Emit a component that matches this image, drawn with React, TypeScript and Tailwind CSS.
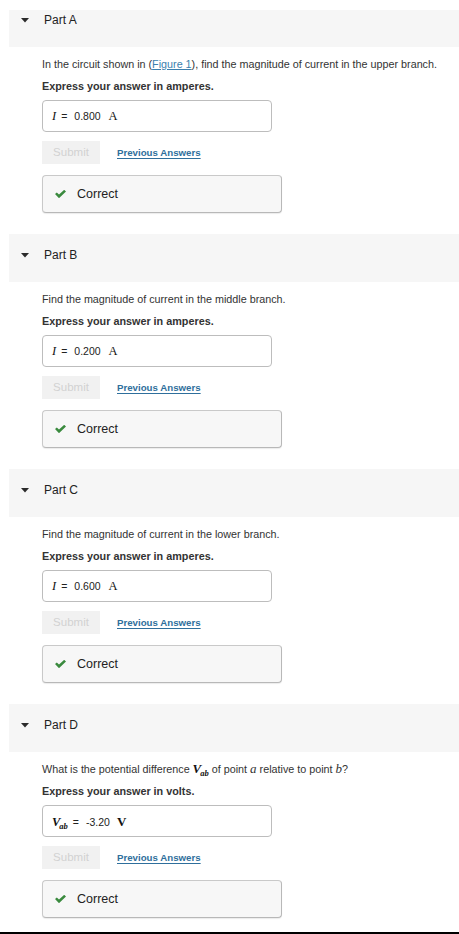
import React from "react"

const serif = "font-['Liberation_Serif','Times_New_Roman',serif]"

function Caret() {
  return (
    <svg width="8" height="5" viewBox="0 0 8 5" className="block">
      <polygon points="0,0 8,0 4,4.6" fill="#2b2b2b" />
    </svg>
  )
}

function Check() {
  return (
    <svg width="11" height="8" viewBox="0 0 11 8" className="block">
      <polygon points="0,4.1 1.8,2.4 4,4.6 9.2,-0.2 11,1.6 4,8.2" fill="#3a8a3e" />
    </svg>
  )
}

function Header({ label, first }: { label: string; first?: boolean }) {
  return (
    <div
      className={`ml-[9px] bg-[#f6f6f6] flex items-start ${
        first ? "h-[37px] pt-[2px]" : "h-[48px] pt-[13px]"
      }`}
    >
      <div className="w-[35px] h-[16px] pl-[12px] flex items-center">
        <Caret />
      </div>
      <span className="text-[12px] leading-[16px] text-[#222]">{label}</span>
    </div>
  )
}

function Answer({ children }: { children: React.ReactNode }) {
  return (
    <div className="mt-[7px] w-[230px] h-[32px] border border-[#bdbdbd] rounded-[4px] bg-white pl-[9px] flex items-center pt-[1px]">
      {children}
    </div>
  )
}

function Controls() {
  return (
    <>
      <div className="mt-[9px] flex items-center h-[23px]">
        <div className="w-[58px] h-[23px] bg-[#f1f1f1] flex items-center justify-center text-[11.5px] text-[#d2d2d2]">
          Submit
        </div>
        <a className="ml-[17px] mt-[1px] text-[9.7px] font-bold text-[#2f6f9c] underline underline-offset-[2px] decoration-[#2f6f9c]">
          Previous Answers
        </a>
      </div>
      <div className="mt-[11px] w-[240px] h-[38px] bg-[#f7f7f7] border border-[#c9c9c9] border-b-[#b8b8b8] border-r-[#b8b8b8] rounded-[4px] shadow-[0_1px_1px_rgba(0,0,0,0.08)] flex items-center pl-[12px]">
        <Check />
        <span className="ml-[11px] text-[12.5px] text-[#222]">Correct</span>
      </div>
    </>
  )
}

function Part({
  label,
  first,
  question,
  unit,
  answer,
  last,
}: {
  label: string
  first?: boolean
  question: React.ReactNode
  unit: string
  answer: React.ReactNode
  last?: boolean
}) {
  return (
    <section className={last ? "" : "mb-[21px]"}>
      <Header label={label} first={first} />
      <div className="pl-[42px]">
        <p className="mt-[10px] text-[10.77px] leading-[14px] text-[#333]">{question}</p>
        <p className="mt-[8px] text-[10.8px] leading-[14px] font-bold text-[#333]">
          Express your answer in {unit}.
        </p>
        <Answer>{answer}</Answer>
        <Controls />
      </div>
    </section>
  )
}

function Vab({ size }: { size: string }) {
  return (
    <span className={`${serif} italic font-semibold text-[#111] ${size}`}>
      V
      <span className="inline-block text-[8.5px] leading-[8px] relative top-[3px] -ml-[1px]">ab</span>
    </span>
  )
}

function CurrentAnswer({ value }: { value: string }) {
  return (
    <div className="flex items-baseline text-[#222]">
      <span className={`${serif} italic text-[12.5px] text-[#111]`}>I</span>
      <span className="ml-[5px] text-[10.5px]">=</span>
      <span className="ml-[7px] text-[10.5px]">{value}</span>
      <span className={`${serif} ml-[8px] text-[12.5px] text-[#111]`}>A</span>
    </div>
  )
}

export default function App() {
  return (
    <div className="w-[459px] h-[934px] overflow-hidden bg-white pt-[10px] font-['Liberation_Sans',Arial,sans-serif] flex flex-col">
      <Part
        label="Part A"
        first
        unit="amperes"
        question={
          <>
            In the circuit shown in (
            <a className="text-[#3b7fae] underline">Figure 1</a>), find the magnitude of current in the
            upper branch.
          </>
        }
        answer={<CurrentAnswer value="0.800" />}
      />
      <Part
        label="Part B"
        unit="amperes"
        question="Find the magnitude of current in the middle branch."
        answer={<CurrentAnswer value="0.200" />}
      />
      <Part
        label="Part C"
        unit="amperes"
        question="Find the magnitude of current in the lower branch."
        answer={<CurrentAnswer value="0.600" />}
      />
      <Part
        label="Part D"
        last
        unit="volts"
        question={
          <>
            What is the potential difference <Vab size="text-[13px]" /> of point{" "}
            <span className={`${serif} italic text-[13px]`}>a</span> relative to point{" "}
            <span className={`${serif} italic text-[13px]`}>b</span>?
          </>
        }
        answer={
          <div className="flex items-baseline text-[#222]">
            <Vab size="text-[12.5px]" />
            <span className="ml-[5px] text-[10.5px]">=</span>
            <span className="ml-[7px] text-[10.5px]">-3.20</span>
            <span className={`${serif} ml-[7px] text-[13px] font-semibold text-[#111]`}>V</span>
          </div>
        }
      />
      <div className="mt-[14px] h-[3px] bg-black shrink-0" />
    </div>
  )
}
